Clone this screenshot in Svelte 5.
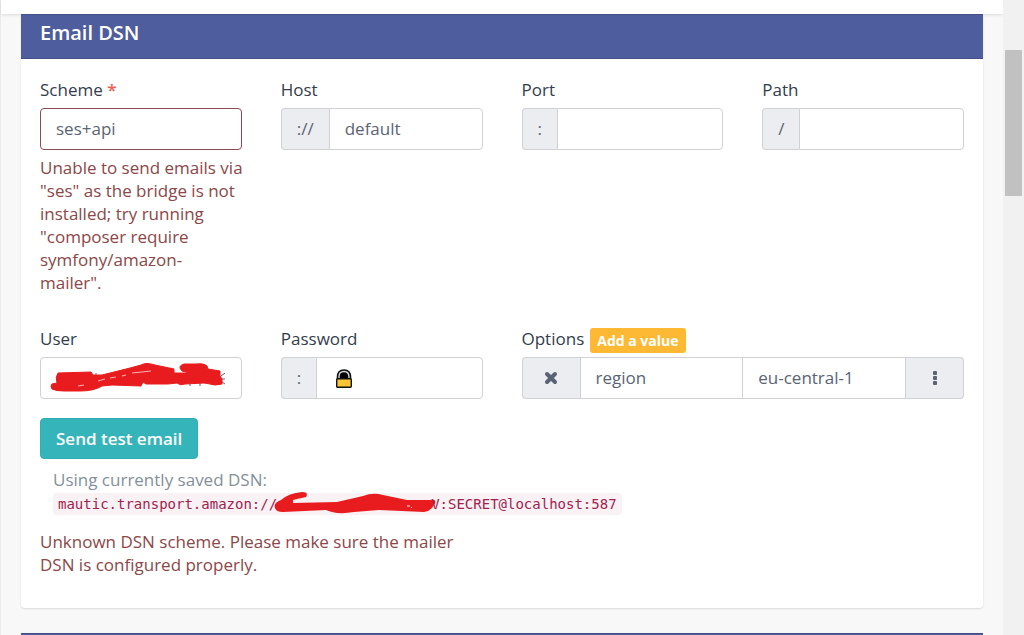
<script>
  let scheme = $state('ses+api');
  let host = $state('default');
  let port = $state('');
  let path = $state('');
  let user = $state('');
  let password = $state('');
  let optionName = $state('region');
  let optionValue = $state('eu-central-1');
</script>

<div class="app">
  <div class="page">
    <div class="topbar"></div>
    <main>
      <section class="panel">
        <h3>Email DSN</h3>
        <form class="fields" onsubmit={(e) => e.preventDefault()}>
          <div class="field invalid">
            <label for="scheme">Scheme <span class="required">*</span></label>
            <div class="group"><input id="scheme" type="text" bind:value={scheme} /></div>
            <p class="error hint">Unable to send emails via "ses" as the bridge is not installed; try running "composer require symfony/amazon-<br />mailer".</p>
          </div>
          <div class="field">
            <label for="host">Host</label>
            <div class="group"><span class="addon">://</span><input id="host" type="text" bind:value={host} /></div>
          </div>
          <div class="field">
            <label for="port">Port</label>
            <div class="group"><span class="addon">:</span><input id="port" type="text" bind:value={port} /></div>
          </div>
          <div class="field">
            <label for="path">Path</label>
            <div class="group"><span class="addon">/</span><input id="path" type="text" bind:value={path} /></div>
          </div>

          <div class="field">
            <label for="user">User</label>
            <div class="group">
              <input id="user" type="text" bind:value={user} />
              <svg class="user-mark" viewBox="0 0 202 42" aria-hidden="true">
                <path d="M181 19l4-3M181 22h4M182 25l3 2M56 16v4M150 26v3M160 25v4" stroke="#5b6475" fill="none" />
                <path d="M18 16 Q15 20 17 26 L12 27 Q10 29 12 32 Q16 34 24 34 L40 34 Q54 34 62 29 L72 28 L101 29 L103 25 L106 27 L128 27 L137 26 Q140 29 145 27 L164 26 L170 27 Q174 29 182 27 L182 22 L180 19 L180 14 L168 12 L167 9 Q164 6 156 7 L144 7 Q137 9 142 14 L149 16 L134 16 L134 12 L115 8 Q106 5 101 8 L90 11 L62 18 L53 18 L51 15 Z" fill="#e81c1e" stroke="#e81c1e" stroke-linejoin="round" />
                <path d="M38 29l6-1M58 24l7-2M70 21l6-1M82 19l4-1M92 16l19-2" stroke="#fbdada" stroke-width="0.8" fill="none" />
              </svg>
            </div>
          </div>
          <div class="field">
            <label for="password">Password</label>
            <div class="group">
              <span class="addon">:</span>
              <input id="password" type="text" bind:value={password} />
              <svg class="lock" viewBox="0 0 18 20" aria-hidden="true">
                <path d="M2.5 10V8Q2.5 1 9 1T15.500 8V10" fill="#000" stroke="#111" stroke-width="1.6" />
                <path d="M4 10V8Q4 2.500 9 2.500T14 8V10" fill="#000" stroke="#d5d8de" stroke-width="1.4" />
                <rect x="1.7" y="9.7" width="14.6" height="8.6" rx="1" fill="#fdc436" stroke="#111" stroke-width="1.4" />
              </svg>
            </div>
          </div>
          <div class="field wide">
            <div class="label-row">
              <label for="option-name">Options</label>
              <button type="button" class="add">Add a value</button>
            </div>
            <div class="group">
              <button type="button" class="addon tool" aria-label="Remove">
                <svg width="14" height="14" viewBox="0 0 14 14"><path d="M3 3l8 8M11 3l-8 8" stroke="#5a6375" stroke-width="4" stroke-linecap="round" /></svg>
              </button>
              <input id="option-name" type="text" bind:value={optionName} />
              <input class="second" type="text" aria-label="Option value" bind:value={optionValue} />
              <button type="button" class="addon tool end" aria-label="Reorder">
                <svg width="6" height="16" viewBox="0 0 6 16"><g fill="#5a6375"><rect x="1" y="1" width="4" height="4" rx="1" /><rect x="1" y="6" width="4" height="4" rx="1" /><rect x="1" y="11" width="4" height="4" rx="1" /></g></svg>
              </button>
            </div>
          </div>

          <div class="field test">
            <button type="button" class="send">Send test email</button>
            <div class="saved">
              <p>Using currently saved DSN:</p>
              <code>mautic.transport.amazon://<svg class="key-mark" viewBox="0 0 154 22" aria-hidden="true"><path d="M-2 15 Q-4 10 4 7 Q12 0 25 -1 Q32 -1 29 4 L16 7 L16 10 L60 9 L86 3 Q96 -1 106 2 L130 7 L153 7 Q161 6 157 12 Q154 18 147 19 L102 17 L77 19 Q59 22 49 17 L6 19 Q-1 19 -2 15 Z" fill="#e81c1e" /><path d="M17 8l5-2M25 7v2M130 13h3M134 14l1 1" stroke="#fbeef1" fill="none" /></svg>V:SECRET@localhost:587</code>
            </div>
            <p class="error status">Unknown DSN scheme. Please make sure the mailer DSN is configured properly.</p>
          </div>
        </form>
      </section>
      <section class="panel next"></section>
    </main>
  </div>
  <div class="scrollbar"><div class="thumb"></div></div>
</div>

<style>
  :global(body) {
    margin: 0;
    font-family: "Open Sans", sans-serif;
    font-size: 17px;
    line-height: 23px;
    color: #5b6475;
  }
  * { box-sizing: border-box; }
  p, h3 { margin: 0; }
  input, button { font: inherit; color: inherit; }
  .app { display: flex; height: 100vh; overflow: hidden; background: #f8f8f8; }
  .page { flex: 1; min-width: 0; border-left: 1px solid #ebebeb; }
  .topbar { height: 14px; background: #fff; box-shadow: 0 1px 3px rgba(0, 0, 0, 0.12); }
  main { display: flex; flex-direction: column; gap: 25px; padding: 0 20px; position: relative; }
  .panel { background: #fff; border-radius: 0 0 4px 4px; box-shadow: 0 1px 2px rgba(0, 0, 0, 0.12); }
  .next { height: 45px; border-radius: 0; border-top: 1px solid #434f88; background: #4e5d9d; }
  h3 {
    padding: 7px 19px 14px;
    background: #4e5d9d;
    border: 1px solid #434f88;
    border-width: 1px 0;
    color: #fff;
    font-size: 20px;
    font-weight: 600;
    line-height: 22px;
  }
  .fields {
    display: grid;
    grid-template-columns: repeat(4, minmax(0, 1fr));
    column-gap: 39px;
    padding: 19px 19px 32px;
  }
  .field { padding-bottom: 19px; }
  .invalid { padding-bottom: 33px; }
  .wide { grid-column: span 2; }
  .test { grid-column: 1 / span 2; padding-bottom: 0; }
  label { display: block; margin-bottom: 7px; color: #343d4e; font-weight: 500; line-height: 23px; }
  .required { color: #f05b4f; font-weight: 600; }
  .label-row { display: flex; align-items: flex-start; gap: 6px; height: 30px; }
  .add {
    height: 25px;
    margin-top: 1px;
    padding: 0 7px;
    border: 0;
    border-radius: 3px;
    background: #fdb933;
    color: #fff;
    font-size: 14px;
    font-weight: 700;
    line-height: 24px;
  }
  .group { position: relative; display: flex; height: 42px; }
  input {
    flex: 1;
    min-width: 0;
    width: 100%;
    padding: 0 15px 2px;
    border: 1px solid #d0d1d4;
    border-radius: 4px;
    background: #fff;
    outline: 0;
  }
  .invalid input { border-color: #8c4a55; }
  .addon {
    display: flex;
    align-items: center;
    padding: 0 15px 2px;
    border: 1px solid #d0d1d4;
    border-right: 0;
    border-radius: 4px 0 0 4px;
    background: #ebedf0;
  }
  .addon + input { border-radius: 0 4px 4px 0; }
  .tool { width: 58px; justify-content: center; padding: 0; }
  .tool + input { border-radius: 0; }
  .second { border-left: 0; border-radius: 0; }
  .end { border: 1px solid #d0d1d4; border-left: 0; border-radius: 0 4px 4px 0; }
  .user-mark { position: absolute; inset: 0; width: 202px; height: 42px; }
  .lock { position: absolute; left: 54px; top: 12px; width: 18px; height: 20px; }
  .error { margin-top: 6px; color: #8c4748; }
  .hint { margin-right: -8px; }
  .send {
    display: block;
    height: 41px;
    padding: 0 15px;
    border: 1px solid #32adb2;
    border-radius: 4px;
    background: #35b4b9;
    color: #fff;
    font-weight: 600;
  }
  .saved { padding: 9px 0 0 13px; color: #858f9b; white-space: nowrap; }
  code {
    display: inline-flex;
    align-items: center;
    height: 22px;
    margin-top: 2px;
    padding: 0 5px;
    border-radius: 4px;
    background: #f9f2f4;
    color: #a3214e;
    font-family: "DejaVu Sans Mono", monospace;
    font-size: 14px;
    line-height: 22px;
    vertical-align: top;
  }
  .key-mark { width: 154px; height: 22px; overflow: visible; }
  .status { margin-top: 15px; }
  .scrollbar { width: 21px; padding: 50px 2px 0; background: #f1f1f1; }
  .thumb { height: 146px; background: #c1c1c1; }
</style>
